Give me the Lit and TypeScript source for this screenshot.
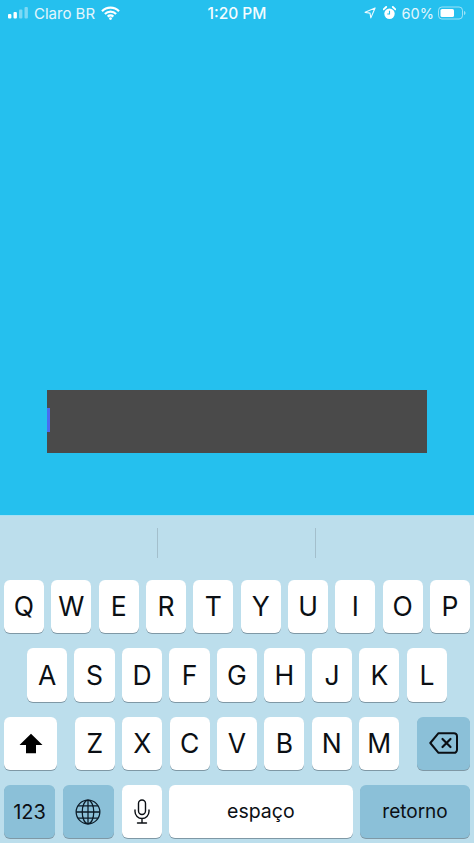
import { LitElement, html, css } from "lit";
import { customElement } from "lit/decorators.js";

const row1 = ["Q", "W", "E", "R", "T", "Y", "U", "I", "O", "P"];
const row2 = ["A", "S", "D", "F", "G", "H", "J", "K", "L"];
const row3 = ["Z", "X", "C", "V", "B", "N", "M"];

@customElement("app-root")
export class AppRoot extends LitElement {
  static styles = css`
    :host {
      display: flex;
      flex-direction: column;
      width: 474px;
      height: 843px;
      overflow: hidden;
      background: #25c0ee;
      font-family: Inter, "Liberation Sans", sans-serif;
      color: #0b0f14;
    }
    .status {
      height: 26px;
      display: grid;
      grid-template-columns: 1fr auto 1fr;
      align-items: center;
      padding: 0 8px;
      color: #fff;
      flex: none;
    }
    .left { display: flex; align-items: center; }
    .carrier { margin-left: 5px; color: #e4f6fc; font-size: 15px; }
    .wifi { margin-left: 6px; }
    .time { font-weight: 500; font-size: 15.5px; color: #f4fcff; }
    .right { display: flex; align-items: center; justify-content: flex-end; }
    .pct { margin-left: 6px; color: #e4f6fc; font-size: 14.5px; }
    .alarm { margin-left: 7px; }
    .batt { margin-left: 4px; }
    .main {
      flex: 1;
      display: flex;
      align-items: flex-end;
      padding: 0 47px 62px;
    }
    .input {
      flex: 1;
      height: 63px;
      background: #4a4a4a;
      display: flex;
      align-items: center;
    }
    .cursor { width: 3px; height: 24px; margin-bottom: 3px; background: #4a6cf0; }
    .kb {
      flex: none;
      height: 328px;
      box-sizing: border-box;
      background: #bcdeec;
      border-top: 1px solid #a5e0f4;
      display: flex;
      flex-direction: column;
    }
    .suggest {
      height: 64px;
      flex: none;
      display: grid;
      grid-template-columns: 158px 158px 1fr;
      padding-top: 12px;
      box-sizing: border-box;
    }
    .suggest span { height: 30px; border-right: 1px solid #a3bfcc; }
    .suggest span:last-child { border: 0; }
    .rows {
      display: flex;
      flex-direction: column;
      gap: 15px;
      padding: 0 4px;
    }
    .row { display: flex; height: 53.3px; gap: 7.4px; }
    .row.home { padding: 0 23px; }
    .key {
      flex: 1 1 0;
      min-width: 0;
      background: #fff;
      border-radius: 6px;
      box-shadow: 0 1px 0 #7f98a5;
      display: flex;
      align-items: center;
      justify-content: center;
      font-size: 26.5px;
      line-height: 1;
    }
    .fn { background: #8bc0d8; }
    .shift, .del { flex: none; width: 53px; }
    .letters { flex: 1; display: flex; gap: 7.4px; margin: 0 10.5px; }
    .n123 { flex: none; width: 51px; font-size: 20px; }
    .globe { flex: none; width: 51px; margin-left: 0.6px; }
    .mic { flex: none; width: 40px; margin-left: 0.3px; }
    .space { flex: 1 1 0; font-size: 19.5px; }
    .ret { flex: none; width: 110px; font-size: 19px; }
  `;

  private key(k: string) {
    return html`<div class="key">${k}</div>`;
  }

  render() {
    return html`
      <div class="status">
        <div class="left">
          <svg width="21" height="12" viewBox="0 0 21 12">
            <rect x="0" y="7" width="3.4" height="4.5" rx="1" fill="#fff" />
            <rect x="5.5" y="5" width="3.4" height="6.5" rx="1" fill="#fff" />
            <rect x="11" y="2.5" width="3.4" height="9" rx="1" fill="#fff" opacity=".4" />
            <rect x="16.5" y="0" width="3.4" height="11.5" rx="1" fill="#fff" opacity=".4" />
          </svg>
          <span class="carrier">Claro BR</span>
          <svg class="wifi" width="19" height="14" viewBox="0 0 19 14">
            <path d="M1 5.2a12 12 0 0 1 17 0M3.9 8a8 8 0 0 1 11.2 0M6.7 10.6a4 4 0 0 1 5.6 0" fill="none" stroke="#fff" stroke-width="2.2" />
            <circle cx="9.5" cy="12.6" r="1.4" fill="#fff" />
          </svg>
        </div>
        <div class="time">1:20 PM</div>
        <div class="right">
          <svg width="12" height="12" viewBox="0 0 13 13">
            <path d="M12 1 1.2 5.8l5.3 .8 .9 5.2z" fill="none" stroke="#f0fbff" stroke-width="1.2" stroke-linejoin="round" />
          </svg>
          <svg class="alarm" width="13" height="14" viewBox="0 0 14 15">
            <circle cx="7" cy="8.3" r="5.6" fill="#fff" />
            <path d="M7 5v3.6h-2.4" fill="none" stroke="#25c0ee" stroke-width="1.2" />
            <path d="M.6 3.6 3.4 1M13.4 3.6 10.6 1" stroke="#fff" stroke-width="2" stroke-linecap="round" />
          </svg>
          <span class="pct">60%</span>
          <svg class="batt" width="28" height="14" viewBox="0 0 28 14">
            <rect x=".5" y="1" width="24" height="12" rx="3.4" fill="none" stroke="#fff" stroke-opacity=".55" />
            <rect x="2.5" y="3" width="13.5" height="8" rx="1.6" fill="#fff" />
            <path d="M26 5v4c.9-.3 1.5-1.1 1.5-2S26.900 5.300 26 5z" fill="#fff" fill-opacity=".55" />
          </svg>
        </div>
      </div>
      <div class="main">
        <div class="input"><div class="cursor"></div></div>
      </div>
      <div class="kb">
        <div class="suggest"><span></span><span></span><span></span></div>
        <div class="rows">
          <div class="row">${row1.map((k) => this.key(k))}</div>
          <div class="row home">${row2.map((k) => this.key(k))}</div>
          <div class="row">
            <div class="key shift">
              <svg width="24" height="21" viewBox="0 0 24 21">
                <path d="M12 .8 23.500 12H17v8.200H7V12H.5z" fill="#000" />
              </svg>
            </div>
            <div class="letters">${row3.map((k) => this.key(k))}</div>
            <div class="key fn del">
              <svg width="29" height="22" viewBox="0 0 29 22">
                <path d="M9.500 1.200h15.500a3 3 0 0 1 3 3v13.600a3 3 0 0 1-3 3H9.500L1.300 11z" fill="none" stroke="#0b0f14" stroke-width="2" stroke-linejoin="round" />
                <path d="M13.500 7l8 8M21.500 7l-8 8" stroke="#0b0f14" stroke-width="2.200" stroke-linecap="round" />
              </svg>
            </div>
          </div>
          <div class="row">
            <div class="key fn n123">123</div>
            <div class="key fn globe">
              <svg width="26" height="26" viewBox="0 0 27 27" fill="none" stroke="#0b1a26" stroke-width="1.300">
                <circle cx="13.500" cy="13.500" r="12.300" />
                <ellipse cx="13.500" cy="13.500" rx="6" ry="12.300" />
                <path d="M13.500 1.200v24.600M1.200 13.500h24.600M3 7.200h21M3 19.800h21" />
              </svg>
            </div>
            <div class="key mic">
              <svg width="16" height="25" viewBox="0 0 16 25" fill="none" stroke="#0b0f14" stroke-width="1.400">
                <rect x="4.500" y="1" width="7" height="14.500" rx="3.500" />
                <path d="M1 11v1.500a7 7 0 0 0 14 0V11M8 19.500v4.500M3.500 24h9" stroke-linecap="round" />
              </svg>
            </div>
            <div class="key space">espaço</div>
            <div class="key fn ret">retorno</div>
          </div>
        </div>
      </div>
    `;
  }
}
